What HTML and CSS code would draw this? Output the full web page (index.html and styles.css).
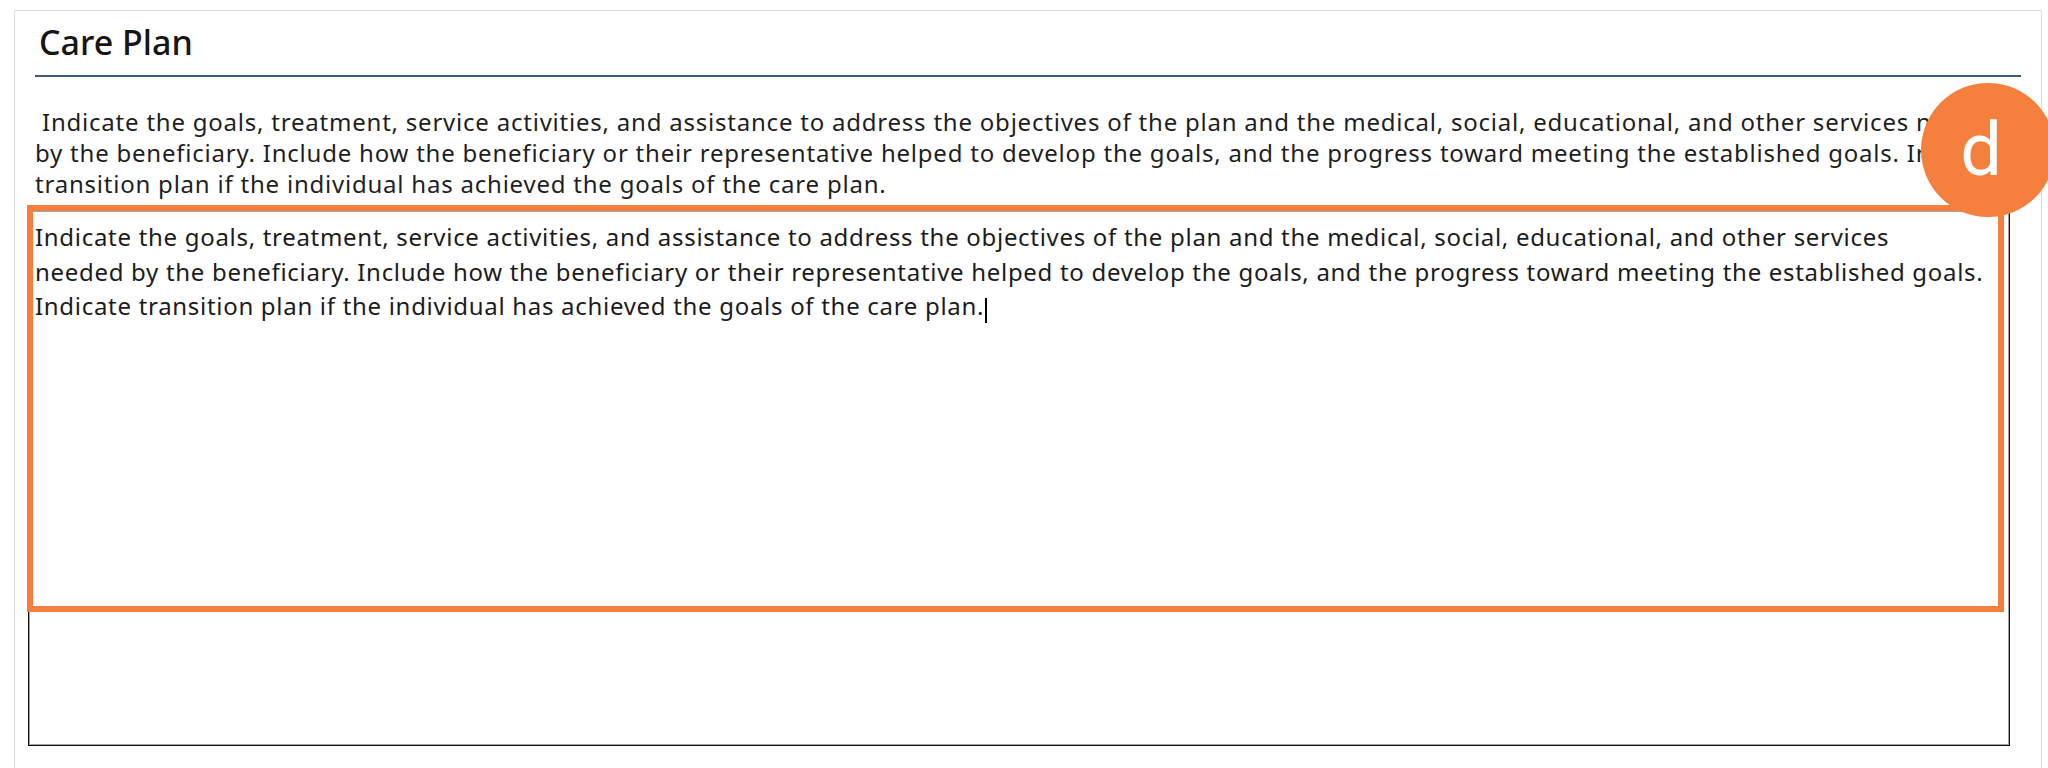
FILE: index.html
```html
<!DOCTYPE html>
<html lang="en">
<head>
<meta charset="utf-8">
<title>Care Plan</title>
<link rel="stylesheet" href="styles.css">
</head>
<body>
<section class="panel">
  <header class="panel-header">
    <h2 class="panel-title">Care Plan</h2>
  </header>
  <p class="panel-desc">&nbsp;Indicate the goals, treatment, service activities, and assistance to address the objectives of the plan and the medical, social, educational, and other services needed<br>by the beneficiary. Include how the beneficiary or their representative helped to develop the goals, and the progress toward meeting the established goals. Indicate<br>transition plan if the individual has achieved the goals of the care plan.</p>
  <div class="textarea">Indicate the goals, treatment, service activities, and assistance to address the objectives of the plan and the medical, social, educational, and other services<br>needed by the beneficiary. Include how the beneficiary or their representative helped to develop the goals, and the progress toward meeting the established goals.<br>Indicate transition plan if the individual has achieved the goals of the care plan.<span class="caret"></span></div>
</section>
<div class="highlight"></div>
<div class="badge">d</div>
</body>
</html>
```
FILE: styles.css
```css
html, body {
  margin: 0;
  padding: 0;
  width: 2048px;
  height: 768px;
  overflow: hidden;
  background: #ffffff;
}

body {
  font-family: "Noto Sans", "Open Sans", sans-serif;
  color: #1c1c1c;
}

.panel {
  box-sizing: border-box;
  margin: 10px 6px 0 14px;
  height: 758px;
  border: 1px solid #dcdcdc;
  border-bottom: none;
  padding: 0 20px 0 13px;
}

.panel-header {
  margin: 0 0 0 7px;
  padding: 11px 0 13px 0;
  border-bottom: 2px solid #3e5b7c;
}

.panel-title {
  margin: 0;
  padding-left: 4px;
  font-size: 34px;
  line-height: 40px;
  font-weight: 500;
  color: #161616;
}

.panel-desc {
  margin: 29px 0 0 0;
  padding-left: 7px;
  font-size: 24px;
  line-height: 31px;
  letter-spacing: 0.78px;
  white-space: nowrap;
  color: #1f1f1f;
}

.textarea {
  box-sizing: border-box;
  margin-top: 11px;
  width: 1982px;
  height: 536px;
  border: 1px solid #111111;
  box-shadow: inset 0 0 0 1px #a3a3a3;
  padding: 9px 4px 0 6px;
  font-size: 24px;
  line-height: 34.5px;
  letter-spacing: 0.7px;
  white-space: nowrap;
  overflow: hidden;
  color: #1c1c1c;
}

.caret {
  display: inline-block;
  width: 2px;
  height: 25px;
  margin-left: 1px;
  background: #000000;
  vertical-align: -8px;
}

.highlight {
  position: absolute;
  left: 27px;
  top: 205px;
  width: 1977px;
  height: 407px;
  box-sizing: border-box;
  border: 6px solid #f5803e;
}

.badge {
  position: absolute;
  left: 1921px;
  top: 83px;
  width: 134px;
  height: 134px;
  border-radius: 50%;
  background: #f5803e;
  color: #ffffff;
  font-family: Roboto, "Liberation Sans", sans-serif;
  font-size: 74px;
  line-height: 134px;
  text-align: center;
  text-indent: -14px;
}
```
